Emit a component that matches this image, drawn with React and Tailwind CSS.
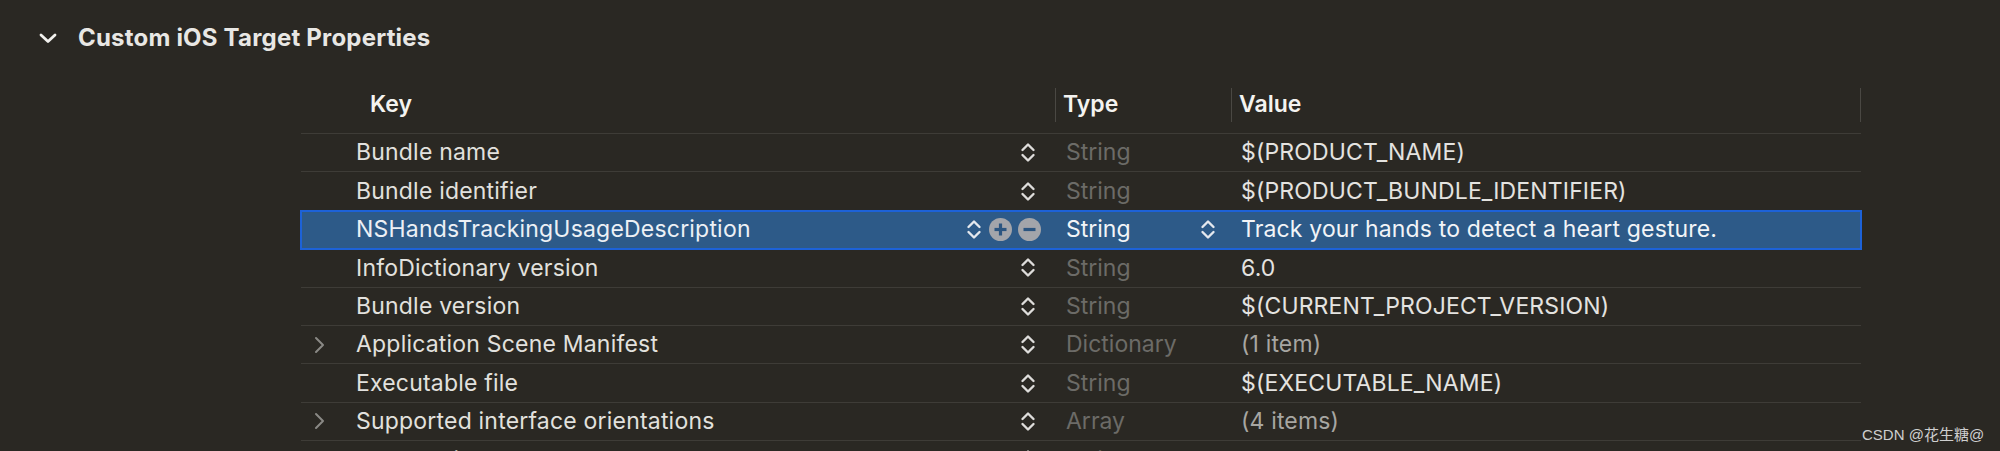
import React from "react";

const rows = [
    { key: "Bundle name", type: "String", value: "$(PRODUCT_NAME)" },
    { key: "Bundle identifier", type: "String", value: "$(PRODUCT_BUNDLE_IDENTIFIER)" },
    {
        key: "NSHandsTrackingUsageDescription",
        type: "String",
        value: "Track your hands to detect a heart gesture.",
        selected: true,
    },
    { key: "InfoDictionary version", type: "String", value: "6.0" },
    { key: "Bundle version", type: "String", value: "$(CURRENT_PROJECT_VERSION)" },
    { key: "Application Scene Manifest", type: "Dictionary", value: "(1 item)", expandable: true, dim: true },
    { key: "Executable file", type: "String", value: "$(EXECUTABLE_NAME)" },
    { key: "Supported interface orientations", type: "Array", value: "(4 items)", expandable: true, dim: true },
    { key: "Bundle display name", type: "String", value: "Heart Detector" },
];

function Stepper({ color = "#dedddb" }) {
    return (
        <svg width="18" height="23" viewBox="0 0 18 23" fill="none">
            <path d="M3.5 9 L9 3.5 L14.5 9" stroke={color} strokeWidth="2.4" strokeLinecap="round" strokeLinejoin="round" />
            <path d="M3.5 14 L9 19.5 L14.5 14" stroke={color} strokeWidth="2.4" strokeLinecap="round" strokeLinejoin="round" />
        </svg>
    );
}

function RoundButton({ plus }) {
    return (
        <svg width="23" height="23" viewBox="0 0 23 23">
            <circle cx="11.5" cy="11.5" r="11.5" fill="#a3a5aa" />
            <path d="M5.5 11.5 H17.5" stroke="#2b5580" strokeWidth="3.2" />
            {plus && <path d="M11.5 5.5 V17.5" stroke="#2b5580" strokeWidth="3.2" />}
        </svg>
    );
}

function Disclosure() {
    return (
        <svg width="11" height="18" viewBox="0 0 11 18" fill="none">
            <path d="M2 2 L9 9 L2 16" stroke="#8a8985" strokeWidth="2" strokeLinecap="round" strokeLinejoin="round" />
        </svg>
    );
}

function Row({ row }) {
    const sel = row.selected;
    return (
        <div
            className={`flex items-center h-[38.4px] border-b ${
                sel
                    ? "relative z-10 bg-[#2d5a88] border-[#2d5a88] outline-2 outline-[#1d62d8] -outline-offset-1"
                    : "border-[#3e3c37]"
            }`}
        >
            <div className="w-[755px] flex items-center h-full">
                <div className="w-[55px] pl-[13px] flex items-center">
                    {row.expandable && <Disclosure />}
                </div>
                <div
                    className={`flex-1 truncate text-[23px] tracking-[0.2px] ${
                        sel ? "text-[#ecf0f5]" : "text-[#e2e1de]"
                    }`}
                >
                    {row.key}
                </div>
                {sel ? (
                    <div className="flex items-center gap-[6px] pr-[15px]">
                        <Stepper color="#e4e8ee" />
                        <RoundButton plus />
                        <RoundButton />
                    </div>
                ) : (
                    <div className="flex items-center pr-[19px]">
                        <Stepper />
                    </div>
                )}
            </div>
            <div className="w-[176px] flex items-center justify-between pl-[10px] pr-[15px] h-full text-[23px]">
                <span className={sel ? "text-[#f2f4f7]" : "text-[#6c6b67]"}>{row.type}</span>
                {sel && <Stepper color="#e4e8ee" />}
            </div>
            <div
                className={`flex-1 pl-[9px] truncate text-[23px] tracking-[0.15px] ${
                    sel ? "text-[#f2f4f7]" : row.dim ? "text-[#a7a6a2]" : "text-[#e4e3e0]"
                }`}
            >
                {row.value}
            </div>
        </div>
    );
}

export default function App() {
    return (
        <div
            className="relative w-[2000px] h-[451px] overflow-hidden bg-[#2a2823] text-[22px]"
            style={{ fontFamily: "Inter, 'Liberation Sans', sans-serif" }}
        >
            <div className="flex items-center h-[76px] pl-[39px]">
                <svg width="18" height="11" viewBox="0 0 18 11" fill="none">
                    <path d="M2 2 L9 8.5 L16 2" stroke="#f2f1ee" strokeWidth="2.8" strokeLinecap="round" strokeLinejoin="round" />
                </svg>
                <h1 className="ml-[21px] text-[24px] tracking-[0.2px] font-bold text-[#e8e7e4]">
                    Custom iOS Target Properties
                </h1>
            </div>

            <div className="ml-[301px] w-[1560px]">
                <div className="flex items-center h-[58px] border-b border-[#3e3c37] font-semibold text-[23px] text-[#f4f3f0]">
                    <div className="w-[754px] pl-[69px]">Key</div>
                    <div className="w-px h-[34px] bg-[#4a4843]" />
                    <div className="w-[175px] pl-[7px]">Type</div>
                    <div className="w-px h-[34px] bg-[#4a4843]" />
                    <div className="flex-1 pl-[7px]">Value</div>
                    <div className="w-px h-[34px] bg-[#4a4843]" />
                </div>
                {rows.map((r) => (
                    <Row key={r.key} row={r} />
                ))}
            </div>

            <div
                className="absolute left-[1862px] top-[424px] text-[15px] text-[#cfcfcf]"
                style={{ fontFamily: "'Liberation Sans', 'Noto Sans CJK SC', sans-serif" }}
            >
                CSDN @花生糖@
            </div>
        </div>
    );
}
